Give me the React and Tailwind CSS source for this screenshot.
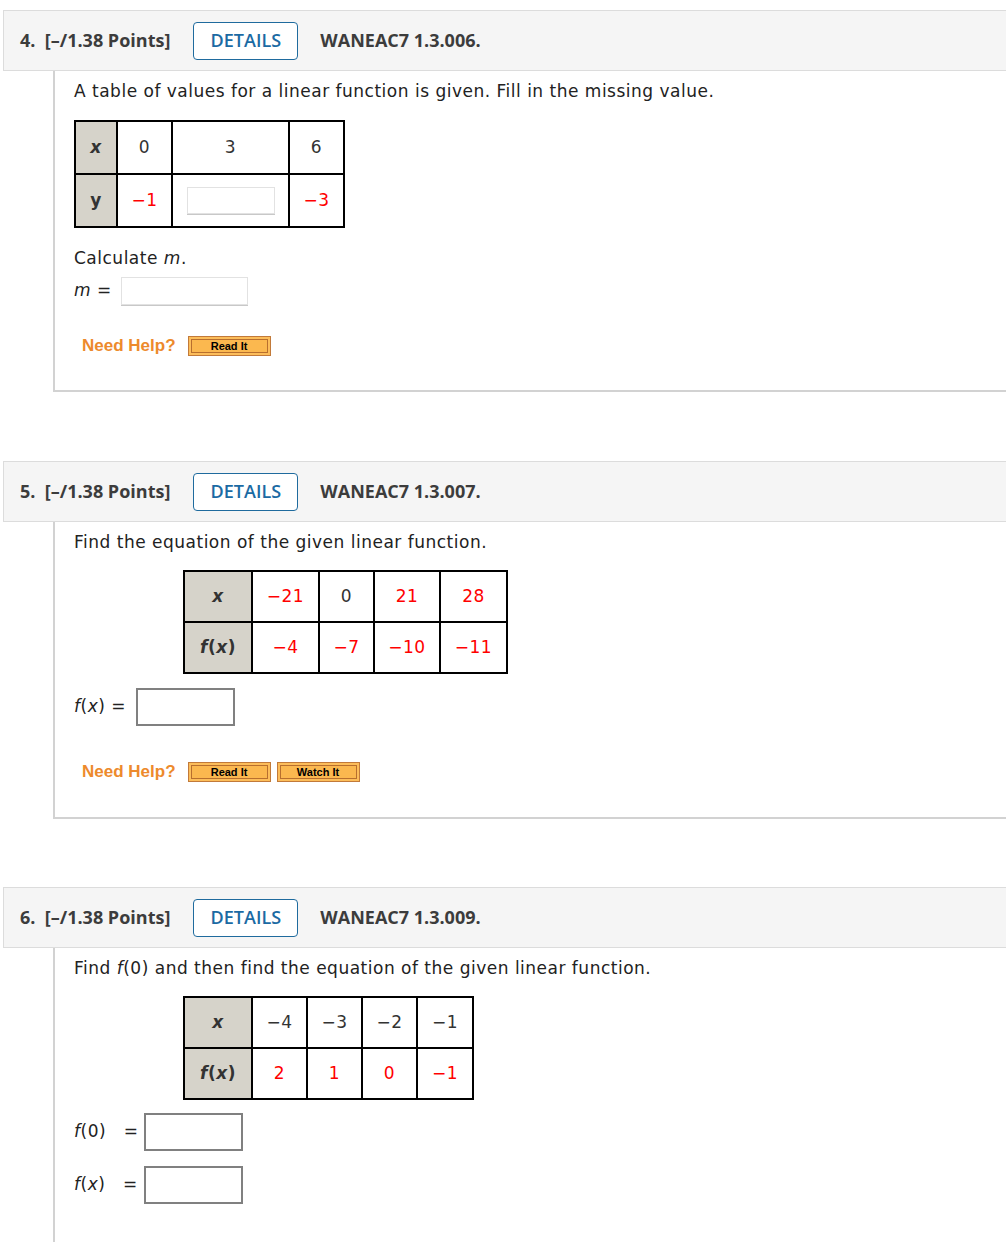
import React from 'react';

const body = { fontFamily: '"DejaVu Sans", Verdana, sans-serif', letterSpacing: '0.5px' };

function Header({ num, code }) {
  return (
    <div
      className="ml-[3px] h-[61px] flex items-center border border-r-0 border-[#dcdcdc] bg-[#f5f5f5] pl-[16px] text-[18px] font-bold tracking-normal text-[#3c3c3c]"
      style={{ fontFamily: '"Open Sans", sans-serif', letterSpacing: 0 }}
    >
      <span>{num}.&nbsp; [–/1.38 Points]</span>
      <button
        type="button"
        className="ml-[23px] h-[38px] w-[105px] rounded-[4px] border-[1.5px] border-[#1f6b9e] bg-white text-[18px] font-semibold text-[#1b6aa3]"
      >
        DETAILS
      </button>
      <span className="ml-[22px]">WANEAC7 {code}</span>
    </div>
  );
}

function OrangeBtn({ children }) {
  return (
    <span className="inline-flex h-[20px] w-[83px] items-center justify-center border border-[#c27a3a] bg-[#fcbd5a] p-[2px]">
      <span
        className="flex h-full w-full items-center justify-center border border-[#b86f2e] bg-[#fbb84f] text-[11px] font-bold text-black"
        style={{ fontFamily: '"Liberation Sans", Arial, sans-serif', letterSpacing: 0 }}
      >
        {children}
      </span>
    </span>
  );
}

function NeedHelp({ watch }) {
  return (
    <div className="flex items-center pl-[8px]">
      <span
        className="text-[17px] font-bold text-[#ed8a2c]"
        style={{ fontFamily: '"Liberation Sans", Arial, sans-serif', letterSpacing: 0 }}
      >
        Need Help?
      </span>
      <span className="ml-[12px] flex gap-[6px]">
        <OrangeBtn>Read It</OrangeBtn>
        {watch && <OrangeBtn>Watch It</OrangeBtn>}
      </span>
    </div>
  );
}

function Fx() {
  return (
    <span className="font-bold">
      <i>f</i>(<i>x</i>)
    </span>
  );
}

function Cell({ w, red, head, children }) {
  return (
    <td
      className={`border-2 border-black text-center text-[17px] ${head ? 'bg-[#d6d3ca] text-[#333]' : ''} ${red ? 'text-[#ff0000]' : 'text-[#333]'}`}
      style={{ width: w }}
    >
      {children}
    </td>
  );
}

function Box({ w = 99, h = 38 }) {
  return <span className="inline-block border-2 border-[#808080] bg-white" style={{ width: w, height: h }} />;
}

export default function App() {
  return (
    <div className="w-[1006px] overflow-hidden bg-white pt-[10px] text-[#222]" style={body}>
      {/* Question 4 */}
      <Header num={4} code="1.3.006." />
      <div className="ml-[53px] h-[321px] border-b-2 border-l-2 border-[#d2d2d2] pl-[19px] pt-[9px]">
        <p className="text-[17px] leading-[22px]">
          A table of values for a linear function is given. Fill in the missing value.
        </p>
        <table className="mt-[18px] border-collapse">
          <tbody>
            <tr className="h-[53px]">
              <Cell w={42} head><b><i>x</i></b></Cell>
              <Cell w={55}>0</Cell>
              <Cell w={117}>3</Cell>
              <Cell w={55}>6</Cell>
            </tr>
            <tr className="h-[53px]">
              <Cell w={42} head><b>y</b></Cell>
              <Cell w={55} red>−1</Cell>
              <Cell w={117}>
                <span className="inline-block h-[27px] w-[88px] border border-[#e2e2e2] align-middle shadow-[0_1px_0_#c8c8c8]" />
              </Cell>
              <Cell w={55} red>−3</Cell>
            </tr>
          </tbody>
        </table>
        <p className="mt-[19px] text-[17px] leading-[22px]">
          Calculate <i>m</i>.
        </p>
        <div className="mt-[8px] flex items-center gap-[9px] text-[17px]">
          <span><i>m</i> =</span>
          <span className="inline-block h-[28px] w-[127px] border border-[#e2e2e2] shadow-[0_1px_0_#c8c8c8]" />
        </div>
        <div className="mt-[28px]">
          <NeedHelp />
        </div>
      </div>

      <div className="h-[69px]" />

      {/* Question 5 */}
      <Header num={5} code="1.3.007." />
      <div className="ml-[53px] h-[297px] border-b-2 border-l-2 border-[#d2d2d2] pl-[19px] pt-[9px]">
        <p className="text-[17px] leading-[22px]">Find the equation of the given linear function.</p>
        <table className="ml-[109px] mt-[17px] border-collapse">
          <tbody>
            <tr className="h-[51px]">
              <Cell w={68} head><b><i>x</i></b></Cell>
              <Cell w={67} red>−21</Cell>
              <Cell w={55}>0</Cell>
              <Cell w={66} red>21</Cell>
              <Cell w={67} red>28</Cell>
            </tr>
            <tr className="h-[51px]">
              <Cell w={68} head><Fx /></Cell>
              <Cell w={67} red>−4</Cell>
              <Cell w={55} red>−7</Cell>
              <Cell w={66} red>−10</Cell>
              <Cell w={67} red>−11</Cell>
            </tr>
          </tbody>
        </table>
        <div className="mt-[14px] flex items-center gap-[10px] text-[17px]">
          <span><i>f</i>(<i>x</i>) =</span>
          <Box />
        </div>
        <div className="mt-[33px]">
          <NeedHelp watch />
        </div>
      </div>

      <div className="h-[68px]" />

      {/* Question 6 */}
      <Header num={6} code="1.3.009." />
      <div className="ml-[53px] h-[300px] border-l-2 border-[#d2d2d2] pl-[19px] pt-[9px]">
        <p className="text-[17px] leading-[22px]">
          Find <i>f</i>(0) and then find the equation of the given linear function.
        </p>
        <table className="ml-[109px] mt-[17px] border-collapse">
          <tbody>
            <tr className="h-[51px]">
              <Cell w={68} head><b><i>x</i></b></Cell>
              <Cell w={55}>−4</Cell>
              <Cell w={55}>−3</Cell>
              <Cell w={55}>−2</Cell>
              <Cell w={56}>−1</Cell>
            </tr>
            <tr className="h-[51px]">
              <Cell w={68} head><Fx /></Cell>
              <Cell w={55} red>2</Cell>
              <Cell w={55} red>1</Cell>
              <Cell w={55} red>0</Cell>
              <Cell w={56} red>−1</Cell>
            </tr>
          </tbody>
        </table>
        <div className="mt-[13px] flex items-center text-[17px]">
          <span className="w-[70px]"><i>f</i>(0)&nbsp;&nbsp; =</span>
          <Box />
        </div>
        <div className="mt-[15px] flex items-center text-[17px]">
          <span className="w-[70px]"><i>f</i>(<i>x</i>)&nbsp;&nbsp; =</span>
          <Box />
        </div>
      </div>
    </div>
  );
}
